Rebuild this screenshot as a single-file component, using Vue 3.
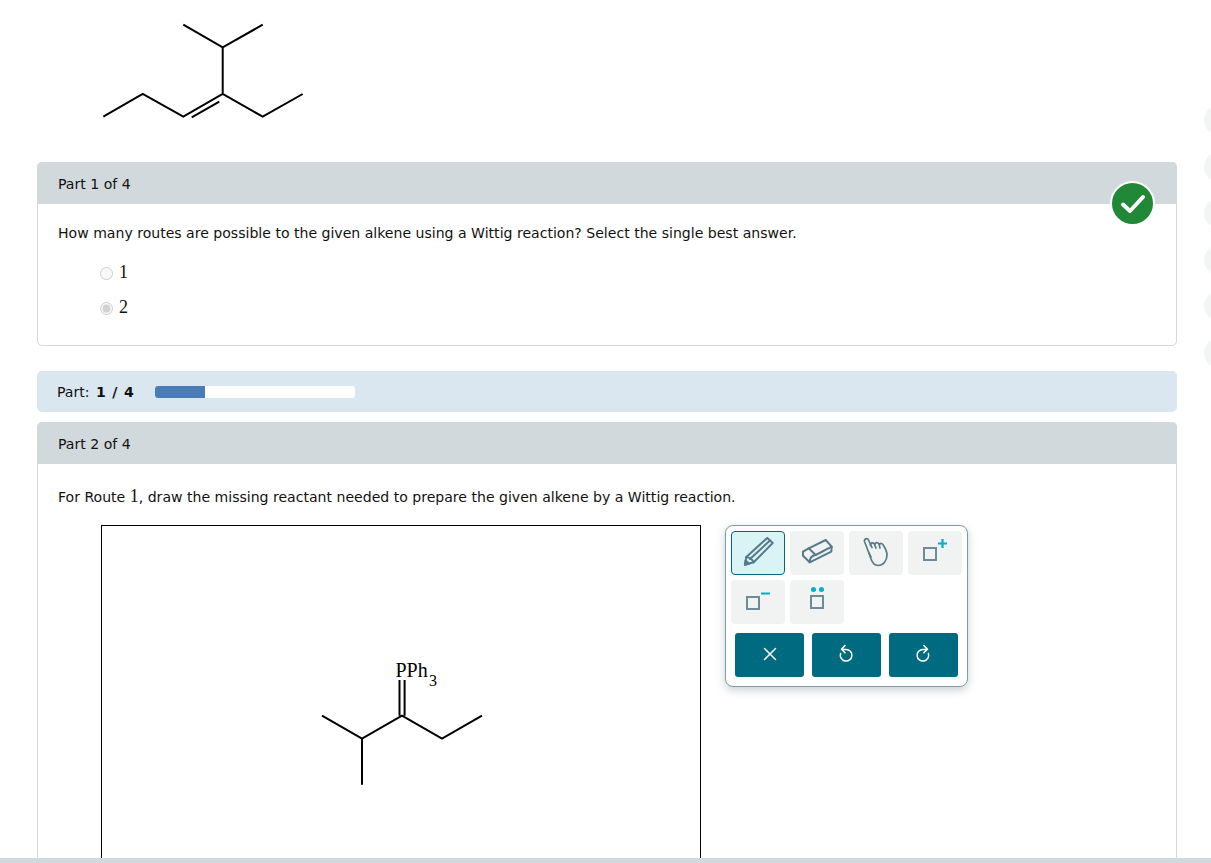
<script setup>
const dots = [0, 1, 2, 3, 4, 5]
</script>

<template>
  <div class="page">
    <div class="top">
      <svg class="mol" width="206" height="100" viewBox="100 20 206 100" fill="none" stroke="#000" stroke-width="2">
        <path d="M103.3 116.7L142.7 94L183.3 116.7L222.7 94L262.7 116.7L302.7 94M222.7 94V47.3M183.3 24.7L222.7 47.3L262.7 24.7M191.7 117.3L219.3 101.7" />
      </svg>
    </div>

    <section class="card first">
      <header class="card-head">Part 1 of 4</header>
      <div class="check">
        <svg width="26" height="22" viewBox="0 0 26 22" fill="none" stroke="#fff" stroke-width="4" stroke-linecap="round" stroke-linejoin="round"><path d="M3 11.5L10 18L23 4" /></svg>
      </div>
      <div class="card-body">
        <p class="q">How many routes are possible to the given alkene using a Wittig reaction? Select the single best answer.</p>
        <label class="opt"><input type="radio" name="a" disabled /><span>1</span></label>
        <label class="opt"><input type="radio" name="a" disabled checked /><span>2</span></label>
      </div>
    </section>

    <div class="progress">
      <span class="plabel">Part: <b>1 / 4</b></span>
      <div class="track"><div class="fill"></div></div>
    </div>

    <section class="card second">
      <header class="card-head">Part 2 of 4</header>
      <div class="card-body two">
        <p class="q">For Route <span class="serif">1</span>, draw the missing reactant needed to prepare the given alkene by a Wittig reaction.</p>
        <div class="work">
          <div class="canvas">
            <svg class="mol2" width="170" height="130" viewBox="320 660 170 130">
              <path fill="none" stroke="#000" stroke-width="2" d="M322 715.7L362 738.7L402 715.7L442 738.7L482 715.7M362 738.7V784.7M399.5 680V715.7M404.6 680V715.7" />
              <text x="395.500" y="677" class="t1">PPh</text>
              <text x="429" y="686" class="t2">3</text>
            </svg>
          </div>
          <div class="tools">
            <div class="grid">
              <button class="tool on">
                <svg width="32" height="32" viewBox="742 537 32 32" fill="none" stroke="#567a87" stroke-width="2" stroke-linejoin="round" stroke-linecap="round">
                  <path d="M746.300 557L767.300 537.900L772.700 543L753.700 562.300L744.900 564.700Z" />
                  <path d="M746.300 557C749.500 557.500 752.500 559.500 753.700 562.300M750 559L770 540.500" />
                  <path d="M744.900 564.700L745.600 560.500L749 563.500Z" fill="#567a87" />
                </svg>
              </button>
              <button class="tool">
                <svg width="32" height="32" viewBox="801 537 32 32" fill="none" stroke="#567a87" stroke-width="2" stroke-linejoin="round" stroke-linecap="round">
                  <path d="M803 551.700L808.700 548.300L825.700 540L831.700 546.700L831.300 551.700L809.700 562.300L803 555.700Z" />
                  <path d="M808.700 548.300L815.700 555L831.700 546.700M815.700 555C812 555.500 809.700 558 809.700 562.300" />
                </svg>
              </button>
              <button class="tool">
                <svg width="32" height="32" viewBox="860 537 32 32" fill="none" stroke="#567a87" stroke-width="1.700" stroke-linecap="round" stroke-linejoin="round">
                  <path d="M871 557C868 552 866 545 864.500 541.500C864 538.500 867.500 537.500 868.500 540L872 547.500" />
                  <path d="M870.500 545.500C870 542.500 873.500 542 874.500 544.500L876 548M875 544.500C875 542 878 542 879 544L880 548M879.500 544.500C880 543 882.500 543 883.500 545.500C885 548 887 551 887 555C887 561 883 565.500 878 565.500C875 565.500 872.500 563 871 559L869 553" />
                </svg>
              </button>
              <button class="tool">
                <span class="sq-wrap">
                  <span class="sq"></span>
                  <svg class="sup plus" width="11" height="11" viewBox="0 0 11 11" fill="none" stroke="#00aecb" stroke-width="2.200"><path d="M5.500 1V10M1 5.500H10" /></svg>
                </span>
              </button>
              <button class="tool">
                <span class="sq-wrap">
                  <span class="sq"></span>
                  <svg class="sup minus" width="9" height="3" viewBox="0 0 9 3" fill="none" stroke="#00aecb" stroke-width="2"><path d="M0 1.500H9" /></svg>
                </span>
              </button>
              <button class="tool dotted">
                <span class="pair"><i></i><i></i></span>
                <span class="sq"></span>
              </button>
            </div>
            <div class="actions">
              <button class="act">
                <svg class="x" width="16" height="16" viewBox="0 0 16 16" fill="none" stroke="#fff" stroke-width="1.500" stroke-linecap="round"><path d="M2.500 1.500L13.500 12.500M13.500 1.500L2.500 12.500" /></svg>
              </button>
              <button class="act">
                <svg width="21" height="22" viewBox="836 644 21 22" fill="none" stroke="#fff" stroke-width="1.500" stroke-linecap="round" stroke-linejoin="round"><path d="M841.500 649.500H846A5.800 5.800 0 1 1 840.600 653.500M845 645.500L841.500 649.300L845 652.800" /></svg>
              </button>
              <button class="act">
                <svg width="21" height="22" viewBox="913 644 21 22" fill="none" stroke="#fff" stroke-width="1.500" stroke-linecap="round" stroke-linejoin="round"><path d="M927.500 649.500H923A5.800 5.800 0 1 0 928.400 653.500M923.800 645.500L927.500 649.300L923.800 652.800" /></svg>
              </button>
            </div>
          </div>
        </div>
      </div>
    </section>

    <div class="side">
      <span v-for="d in dots" :key="d" class="dot"></span>
    </div>
    <div class="footer"></div>
  </div>
</template>

<style>
html, body { margin: 0; overflow: hidden; background: #fff; }
</style>

<style scoped>
.page {
  position: relative;
  height: 863px;
  overflow: hidden;
  padding: 0 34px 0 37px;
  box-sizing: border-box;
  font-family: "DejaVu Sans", Verdana, sans-serif;
  font-size: 14.070px;
  color: #111;
}
.top { height: 162px; padding: 20px 0 0 63px; box-sizing: border-box; }
.mol { display: block; }
.card {
  position: relative;
  border: 1px solid #d2dadd;
  border-radius: 5px;
  background: #fff;
}
.first { height: 184px; box-sizing: border-box; }
.second { margin-top: 10px; height: 470px; box-sizing: border-box; }
.card-head {
  margin: -1px -1px 0;
  height: 42px;
  padding-left: 21px;
  line-height: 44px;
  background: #d1d9dc;
  border-radius: 5px 5px 0 0;
}
.card-body { padding: 20px 20px 0; }
.q { margin: 0; line-height: 19px; }
.first .q { margin-bottom: 16px; }
.two { padding-top: 23px; }
.serif { font-family: "Liberation Serif", serif; font-size: 18px; }
.opt {
  display: flex;
  align-items: center;
  height: 35px;
  padding-left: 42px;
  font-family: "Liberation Serif", serif;
  font-size: 18px;
  margin-top: -4px;
  margin-bottom: 4px;
}
.opt input { margin: 1px 6px 0 0; width: 13px; height: 13px; }
.work { display: flex; gap: 24px; margin: 18px 0 0 43px; align-items: flex-start; }
.canvas {
  width: 598px;
  height: 400px;
  border: 1px solid #000;
  position: relative;
  flex: none;
}
.mol2 { position: absolute; left: 218px; top: 134px; }
.t1 { font: 20px "Liberation Serif", serif; fill: #000; }
.t2 { font: 16px "Liberation Serif", serif; fill: #000; }
.tools {
  width: 243px;
  height: 162px;
  box-sizing: border-box;
  flex: none;
  border: 1px solid #7f9ba5;
  border-radius: 8px;
  padding: 5px;
  background: #fff;
  box-shadow: 0 3px 8px rgba(90, 120, 130, .35);
}
.grid { display: grid; grid-template-columns: repeat(4, 54px); grid-auto-rows: 44px; gap: 5px; }
.tool {
  display: flex;
  align-items: center;
  justify-content: center;
  padding: 0;
  border: 0;
  border-radius: 4px;
  background: #f1f3f3;
}
.tool.on { background: #d9f3f7; border: 1px solid #00687e; }
.sq { display: block; width: 10px; height: 10px; border: 2px solid #6d8b98; flex: none; }
.sq-wrap { position: relative; display: block; width: 14px; height: 14px; top: 1px; left: -5px; }
.sup { position: absolute; }
.plus { left: 14px; top: -9px; }
.minus { left: 15px; top: -4px; }
.dotted { flex-direction: column; justify-content: flex-start; gap: 3px; padding-top: 7px; }
.pair { display: flex; gap: 3px; }
.pair i { display: block; width: 5px; height: 5px; border-radius: 50%; background: #00aecb; }
.actions { display: flex; gap: 8px; margin: 9px 0 0 4px; }
.act {
  width: 69px;
  height: 44px;
  display: flex;
  align-items: center;
  justify-content: center;
  padding: 0;
  border: 0;
  border-radius: 3px;
  background: #006a80;
}
.check {
  position: absolute;
  left: 1072px;
  top: 18px;
  width: 41px;
  height: 41px;
  border: 2px solid #fff;
  border-radius: 50%;
  background: #218838;
  display: flex;
  align-items: center;
  justify-content: center;
}
.progress {
  margin-top: 25px;
  height: 41px;
  display: flex;
  align-items: center;
  padding-left: 20px;
  background: #dae6f0;
  border-radius: 5px;
}
.plabel { width: 98px; flex: none; }
.plabel b { margin-left: 2px; letter-spacing: .8px; }
.track { width: 200px; height: 12px; background: #fff; border-radius: 3px; overflow: hidden; }
.fill { width: 50px; height: 100%; background: #4a7db5; }
.side {
  position: absolute;
  left: 1204px;
  top: 105px;
  display: flex;
  flex-direction: column;
  gap: 16.500px;
}
.dot { display: block; width: 30px; height: 30px; border-radius: 50%; background: #f3f4f4; }
.footer { position: absolute; left: 0; right: 0; bottom: 0; height: 5px; background: #d1d9dc; }
</style>
